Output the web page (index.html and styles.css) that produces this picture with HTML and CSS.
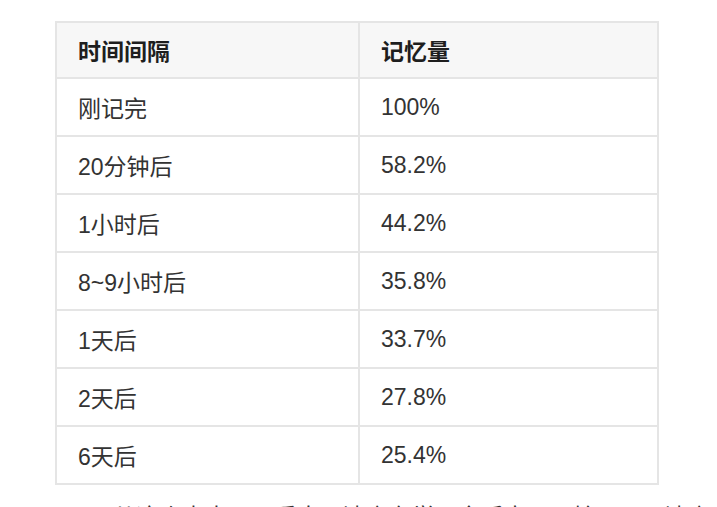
FILE: index.html
```html
<!DOCTYPE html>
<html lang="zh">
<head>
<meta charset="utf-8">
<title>遗忘曲线</title>
<link rel="stylesheet" href="styles.css">
</head>
<body>
<main class="article">
  <table class="data-table">
    <colgroup>
      <col class="col-time">
      <col class="col-mem">
    </colgroup>
    <thead>
      <tr><th>时间间隔</th><th>记忆量</th></tr>
    </thead>
    <tbody>
      <tr><td>刚记完</td><td>100%</td></tr>
      <tr><td>20分钟后</td><td>58.2%</td></tr>
      <tr><td>1小时后</td><td>44.2%</td></tr>
      <tr><td>8~9小时后</td><td>35.8%</td></tr>
      <tr><td>1天后</td><td>33.7%</td></tr>
      <tr><td>2天后</td><td>27.8%</td></tr>
      <tr><td>6天后</td><td>25.4%</td></tr>
    </tbody>
  </table>
  <p class="para">从这个表中可以看出，遗忘在学习之后立即开始，而且遗忘的进程并不是均匀的。</p>
</main>
</body>
</html>
```

FILE: styles.css
```css
html, body {
  margin: 0;
  padding: 0;
  background: #ffffff;
}

body {
  font-family: "Liberation Sans", "Noto Sans CJK SC", sans-serif;
  color: #333333;
  overflow: hidden;
  height: 507px;
}

.article {
  padding: 21px 0 0 55px;
  width: 662px;
}

.data-table {
  border-collapse: collapse;
  table-layout: fixed;
  width: 604px;
  font-size: 23px;
}

.col-time {
  width: 303px;
}

.data-table th,
.data-table td {
  border: 2px solid #e5e5e5;
  padding: 0 21px;
  text-align: left;
  vertical-align: middle;
}

.data-table th {
  height: 54px;
  background: #f7f7f7;
  font-weight: 700;
  color: #1e1e1e;
  font-family: "Liberation Serif", "Noto Sans CJK SC", serif;
}

.data-table td {
  height: 56px;
  font-weight: 400;
  color: #333333;
}

.para {
  margin: 12px 0 0 0;
  padding-left: 58px;
  font-size: 23px;
  line-height: 40px;
  color: #333333;
}
```
